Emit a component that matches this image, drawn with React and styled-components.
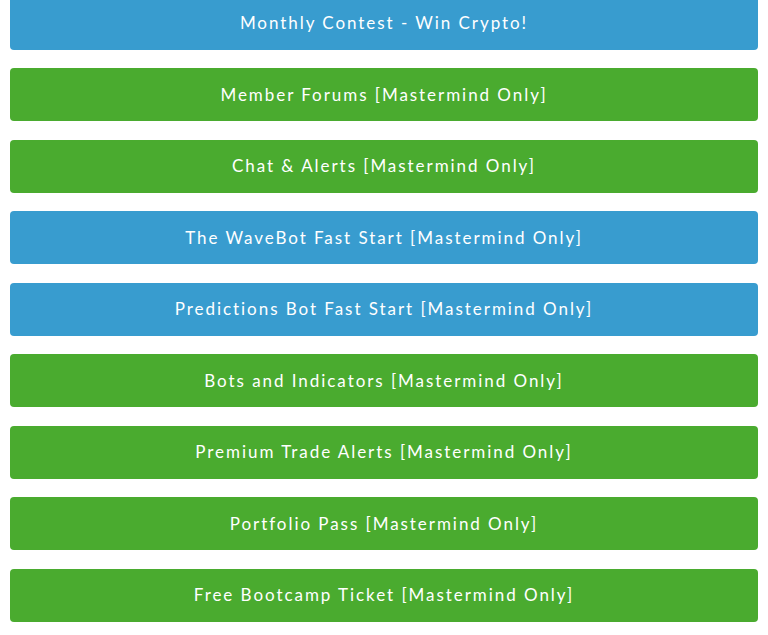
import React from "react";
import styled, { createGlobalStyle } from "styled-components";

const GlobalStyle = createGlobalStyle`
  html, body {
    margin: 0;
    padding: 0;
    background: #ffffff;
    overflow: hidden;
  }
`;

const List = styled.nav`
  display: flex;
  flex-direction: column;
  gap: 18.5px;
  padding: 0 10px;
  margin-top: -3.5px;
`;

const LinkButton = styled.a`
  display: flex;
  align-items: center;
  justify-content: center;
  height: 53px;
  padding-bottom: 1px;
  box-sizing: border-box;
  border-radius: 4px;
  background: ${({ $tone }) => ($tone === "blue" ? "#389ccf" : "#4aab2f")};
  color: #ffffff;
  font-family: Lato, "Noto Sans", sans-serif;
  font-size: 17px;
  letter-spacing: 1.95px;
  text-decoration: none;
  cursor: pointer;
`;

const links = [
  { label: "Monthly Contest - Win Crypto!", tone: "blue" },
  { label: "Member Forums [Mastermind Only]", tone: "green" },
  { label: "Chat & Alerts [Mastermind Only]", tone: "green" },
  { label: "The WaveBot Fast Start [Mastermind Only]", tone: "blue" },
  { label: "Predictions Bot Fast Start [Mastermind Only]", tone: "blue" },
  { label: "Bots and Indicators [Mastermind Only]", tone: "green" },
  { label: "Premium Trade Alerts [Mastermind Only]", tone: "green" },
  { label: "Portfolio Pass [Mastermind Only]", tone: "green" },
  { label: "Free Bootcamp Ticket [Mastermind Only]", tone: "green" },
];

const App = () => {
  return (
    <>
      <GlobalStyle />
      <List>
        {links.map((link) => (
          <LinkButton key={link.label} $tone={link.tone}>
            {link.label}
          </LinkButton>
        ))}
      </List>
    </>
  );
};

export default App;
